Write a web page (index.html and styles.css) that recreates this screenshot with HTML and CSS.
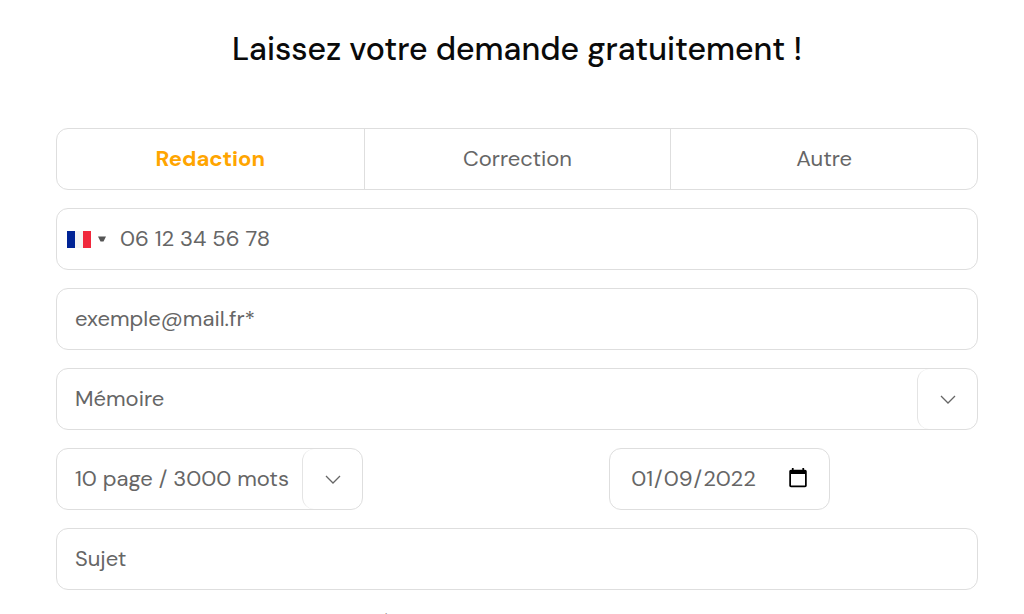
FILE: index.html
```
<!DOCTYPE html>
<html lang="fr">
<head>
<meta charset="utf-8">
<meta name="viewport" content="width=device-width, initial-scale=1.0">

<title>Laissez votre demande</title>
<link rel="stylesheet" href="styles.css">
</head>
<body>
	<form class="order">
		<h1 class="order-title">Laissez votre demande gratuitement !</h1>

		<div class="tabs">
			<button type="button" class="tab active">Redaction</button>
			<button type="button" class="tab">Correction</button>
			<button type="button" class="tab">Autre</button>
		</div>

		<div class="field phone">
			<button type="button" class="country" aria-label="France">
				<svg class="flag" viewBox="0 0 24 17">
					<rect width="24" height="17" fill="#f4f4f4"/>
					<rect width="8" height="17" fill="#002395"/>
					<rect x="16" width="8" height="17" fill="#f0283c"/>
				</svg>
				<svg class="caret" viewBox="0 0 8 6"><path d="M0 0.5h8L5.5 5.5h-3z" fill="#555"/></svg>
			</button>
			<input type="tel" class="control" placeholder="06 12 34 56 78" aria-label="Téléphone">
		</div>

		<div class="field">
			<input type="email" class="control" placeholder="exemple@mail.fr*" aria-label="E-mail">
		</div>

		<div class="field">
			<select class="control" aria-label="Type de travail">
				<option>Mémoire</option>
			</select>
			<span class="arrow"><svg viewBox="0 0 16 9"><path d="M1 1l7 7 7-7"/></svg></span>
		</div>

		<div class="row">
			<div class="field pages">
				<select class="control" aria-label="Nombre de pages">
					<option>10 page / 3000 mots</option>
				</select>
				<span class="arrow"><svg viewBox="0 0 16 9"><path d="M1 1l7 7 7-7"/></svg></span>
			</div>
			<div class="field date">
				<input type="date" class="control" value="2022-01-09" aria-label="Date">
			</div>
		</div>

		<div class="field">
			<input type="text" class="control" placeholder="Sujet" aria-label="Sujet">
		</div>

		<h2 class="order-subtitle">À propos de vous :</h2>
	</form>
</body>
</html>
```
FILE: styles.css
```
* {
	box-sizing: border-box;
}

body {
	margin: 0;
	background: #fff;
	color: #666;
	font-family: "DM Sans", Inter, "Liberation Sans", sans-serif;
	font-size: 22px;
}

button,
input,
select {
	margin: 0;
	padding: 0;
	border: 0;
	background: none;
	color: inherit;
	font: inherit;
}

.order {
	display: flex;
	flex-direction: column;
	gap: 18px;
	padding: 24px 46px 18px 56px;
}

.order-title,
.order-subtitle {
	margin: 0;
	color: #0a0a0a;
	font-size: 32px;
	font-weight: 500;
	line-height: 50px;
	text-align: center;
}

.order-title {
	margin-bottom: 36px;
}

.tabs {
	display: grid;
	grid-template-columns: repeat(3, 1fr);
	height: 62px;
	border: 1px solid #dedede;
	border-radius: 12px;
}

.tab {
	padding-bottom: 2px;
}

.tab + .tab {
	border-left: 1px solid #dedede;
}

.tab.active {
	color: #ffa500;
	font-weight: 700;
}

.field {
	display: flex;
	height: 62px;
	border: 1px solid #dedede;
	border-radius: 12px;
}

.control {
	flex: 1;
	min-width: 0;
	padding: 0 0 2px 18px;
	border-radius: 12px;
	appearance: none;
}

.control::placeholder {
	color: #666;
	opacity: 1;
}

.country {
	display: flex;
	align-items: center;
	gap: 7px;
	padding-left: 10px;
}

.flag {
	width: 24px;
	height: 17px;
}

.caret {
	width: 8px;
	height: 6px;
}

.phone .control {
	padding-left: 14px;
}

.arrow {
	display: flex;
	align-items: center;
	justify-content: center;
	width: 60px;
	border-left: 1px solid #e4e4e4;
	border-radius: 12px;
}

.arrow svg {
	width: 16px;
	height: 9px;
	fill: none;
	stroke: #666;
	stroke-width: 1.3;
}

.row {
	display: grid;
	grid-template-columns: 5fr 4fr 6fr;
}

.date {
	grid-column: 3;
	width: 60%;
}

.date .control {
	padding: 0 18px 2px 20px;
}
```
